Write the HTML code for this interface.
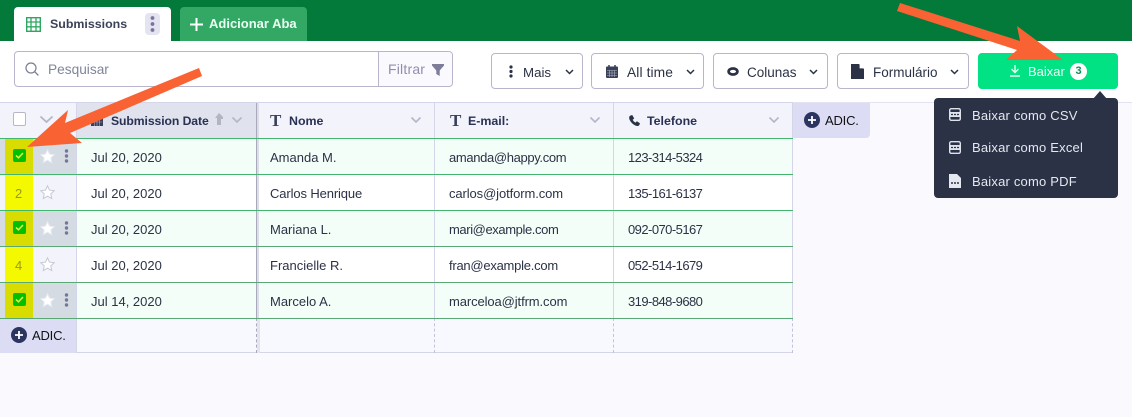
<!DOCTYPE html>
<html><head><meta charset="utf-8">
<style>
html,body{margin:0;padding:0;width:1132px;height:417px;overflow:hidden;background:#faf9fe;font-family:"Liberation Sans",sans-serif;color:#2b3245;font-size:13px}
.a{position:absolute;box-sizing:border-box}
.t{position:absolute;white-space:nowrap;line-height:16px}
.h{font-weight:bold;font-size:12.4px;color:#2a3152;top:112.500px}
.p{letter-spacing:-.55px}
.btn{position:absolute;box-sizing:border-box;top:53px;height:36px;background:#fff;border:1px solid #b8b6cc;border-radius:4px}
svg{position:absolute;overflow:visible}
</style></head><body>
<div class="a" style="left:0;top:0;width:1132px;height:41px;background:#037a3a"></div>
<div class="a" style="left:0;top:41px;width:1132px;height:61px;background:#fff"></div>

<!-- tabs -->
<div class="a" style="left:14px;top:7px;width:157px;height:34px;background:#fff;border-radius:4px 4px 0 0"></div>
<svg style="left:26px;top:17px" width="15" height="15"><rect x=".7" y=".7" width="13.6" height="13.6" fill="none" stroke="#2ea860" stroke-width="1.4"/><path d="M0 5h15M0 9.8h15M5 0v15M10 0v15" stroke="#2ea860" stroke-width="1.3"/></svg>
<div class="t" style="left:50px;top:16px;font-weight:bold;font-size:12.4px;color:#3a4258">Submissions</div>
<div class="a" style="left:145px;top:13px;width:15px;height:22px;background:#e4e3f2;border-radius:4px"></div>
<svg style="left:145px;top:13px" width="15" height="22"><g fill="#77769a"><circle cx="7.5" cy="5" r="1.9"/><circle cx="7.5" cy="11" r="1.9"/><circle cx="7.5" cy="17" r="1.9"/></g></svg>
<div class="a" style="left:180px;top:7px;width:127px;height:34px;background:#33a864;border-radius:4px 4px 0 0"></div>
<svg style="left:190px;top:18px" width="13" height="13"><path d="M6.5 0v13M0 6.5h13" stroke="#fff" stroke-width="2"/></svg>
<div class="t" style="left:209px;top:16px;font-weight:bold;font-size:13px;color:#eafff2">Adicionar Aba</div>

<!-- search -->
<div class="a" style="left:14px;top:51px;width:439px;height:36px;background:#fff;border:1px solid #b8b6cc;border-radius:4px"></div>
<div class="a" style="left:378px;top:52px;width:74px;height:34px;background:#faf9fe;border-left:1px solid #b8b6cc;border-radius:0 4px 4px 0"></div>
<svg style="left:25px;top:62px" width="15" height="15"><circle cx="6" cy="6" r="5" fill="none" stroke="#777f95" stroke-width="1.2"/><path d="M9.8 9.8l3.600 3.600" stroke="#777f95" stroke-width="1.3"/></svg>
<div class="t" style="left:48px;top:62px;font-size:13.700px;color:#7f8699">Pesquisar</div>
<div class="t" style="left:388px;top:61px;font-size:14px;letter-spacing:.2px;color:#8f8fad">Filtrar</div>
<svg style="left:432px;top:64px" width="12" height="12"><path d="M0 0h12v1.500L7.700 6.500V12L4.300 10V6.500L0 1.500z" fill="#7d7c99"/></svg>

<!-- toolbar buttons -->
<div class="btn" style="left:491px;width:92px"></div>
<svg style="left:509px;top:65px" width="4" height="13"><g fill="#2b3245"><circle cx="2" cy="2" r="1.600"/><circle cx="2" cy="6.500" r="1.600"/><circle cx="2" cy="11" r="1.600"/></g></svg>
<div class="t" style="left:523px;top:65px;font-size:13.300px">Mais</div>
<svg style="left:565px;top:69px" width="9" height="6"><path d="M1 1l3.500 3.500L8 1" fill="none" stroke="#2b3245" stroke-width="1.500"/></svg>

<div class="btn" style="left:591px;width:113px"></div>
<svg style="left:606px;top:65px" width="12" height="13"><rect x="0" y="1.500" width="12" height="11.500" rx="1" fill="#39405a"/><path d="M3 0v3M9 0v3" stroke="#39405a" stroke-width="1.500"/><path d="M1 5.500h10M1 8h10M1 10.500h10M3.500 5v7M6 5v7M8.500 5v7" stroke="#aeb2c2" stroke-width=".6"/></svg>
<div class="t" style="left:627px;top:65px;font-size:13.800px;letter-spacing:.1px">All time</div>
<svg style="left:686px;top:69px" width="9" height="6"><path d="M1 1l3.500 3.500L8 1" fill="none" stroke="#2b3245" stroke-width="1.500"/></svg>

<div class="btn" style="left:713px;width:115px"></div>
<svg style="left:727px;top:67px" width="12" height="9"><ellipse cx="6" cy="4.500" rx="4.400" ry="3" fill="none" stroke="#2b3245" stroke-width="2.700"/></svg>
<div class="t" style="left:747px;top:65px;font-size:13.500px">Colunas</div>
<svg style="left:809px;top:69px" width="9" height="6"><path d="M1 1l3.500 3.500L8 1" fill="none" stroke="#2b3245" stroke-width="1.500"/></svg>

<div class="btn" style="left:837px;width:132px"></div>
<svg style="left:851px;top:64px" width="13" height="15"><path d="M0 0h8l5 5v10H0z" fill="#2b3245"/><path d="M8.600 0v4.400H13" fill="#fff"/></svg>
<div class="t" style="left:873px;top:65px;font-size:13.500px">Formulário</div>
<svg style="left:950px;top:69px" width="9" height="6"><path d="M1 1l3.500 3.500L8 1" fill="none" stroke="#2b3245" stroke-width="1.500"/></svg>

<div class="a" style="left:978px;top:53px;width:140px;height:36px;background:#00e283;border-radius:4px"></div>
<svg style="left:1010px;top:65px" width="10" height="12"><path d="M5 0v7M1.500 4L5 7.500 8.500 4M0 11h10" fill="none" stroke="#eafff4" stroke-width="1.400"/></svg>
<div class="t" style="left:1028px;top:64px;font-size:13px;color:#eafff4">Baixar</div>
<div class="a" style="left:1070px;top:63px;width:17px;height:17px;background:#fff;border-radius:50%;color:#0a8f58;font-size:11px;font-weight:bold;line-height:17px;text-align:center">3</div>

<!-- table header -->
<div class="a" style="left:0;top:102px;width:793px;height:1px;background:#d5d5ea"></div>
<div class="a" style="left:793px;top:102px;width:339px;height:1px;background:#e2e2f2"></div>
<div class="a" style="left:0;top:103px;width:77px;height:35px;background:#f3f3fc"></div>
<div class="a" style="left:77px;top:103px;width:179px;height:35px;background:#e0e2ee"></div>
<div class="a" style="left:258px;top:103px;width:535px;height:35px;background:#f3f3fc"></div>
<div class="a" style="left:793px;top:103px;width:77px;height:35px;background:#dcddf5;border-radius:0 0 4px 0"></div>

<!-- body rows -->
<div class="a" style="left:0;top:138px;width:793px;height:36px;background:#f4fef8"></div>
<div class="a" style="left:0;top:174px;width:793px;height:36px;background:#fff"></div>
<div class="a" style="left:0;top:210px;width:793px;height:36px;background:#f4fef8"></div>
<div class="a" style="left:0;top:246px;width:793px;height:36px;background:#fff"></div>
<div class="a" style="left:0;top:282px;width:793px;height:36px;background:#f4fef8"></div>
<div class="a" style="left:0;top:318px;width:793px;height:35px;background:#f8f8ff;border-bottom:1px solid #d5d5ea"></div>

<!-- left column -->
<div class="a" style="left:0;top:138px;width:77px;height:36px;background:#d5dbe3"></div>
<div class="a" style="left:0;top:174px;width:77px;height:36px;background:#f3f3fc"></div>
<div class="a" style="left:0;top:210px;width:77px;height:36px;background:#d5dbe3"></div>
<div class="a" style="left:0;top:246px;width:77px;height:36px;background:#f3f3fc"></div>
<div class="a" style="left:0;top:282px;width:77px;height:36px;background:#d5dbe3"></div>
<div class="a" style="left:0;top:318px;width:77px;height:35px;background:#dcddf5"></div>

<div class="a" style="left:5px;top:138px;width:28px;height:36px;background:#d8dc00"></div>
<div class="a" style="left:5px;top:174px;width:28px;height:36px;background:#f4f900"></div>
<div class="a" style="left:5px;top:210px;width:28px;height:36px;background:#d8dc00"></div>
<div class="a" style="left:5px;top:246px;width:28px;height:36px;background:#f4f900"></div>
<div class="a" style="left:5px;top:282px;width:28px;height:36px;background:#d8dc00"></div>
<div class="t" style="left:15px;top:186px;font-size:13px;color:#9a9c10">2</div>
<div class="t" style="left:15px;top:258px;font-size:13px;color:#9a9c10">4</div>

<!-- column separators -->
<div class="a" style="left:76px;top:103px;width:1px;height:250px;background:#d5d5ea"></div>
<div class="a" style="left:256px;top:103px;width:1px;height:215px;background:#a9a9bd"></div>
<div class="a" style="left:257px;top:103px;width:2px;height:215px;background:#dddde5"></div>
<div class="a" style="left:434px;top:103px;width:1px;height:215px;background:#d5d5ea"></div>
<div class="a" style="left:613px;top:103px;width:1px;height:215px;background:#d5d5ea"></div>
<div class="a" style="left:792px;top:103px;width:1px;height:215px;background:#d5d5ea"></div>
<div class="a" style="left:256px;top:318px;width:0;height:35px;border-left:1px dashed #a9a9bd"></div>
<div class="a" style="left:257px;top:318px;width:3px;height:35px;background:#e4e4ea"></div>
<div class="a" style="left:434px;top:318px;width:0;height:35px;border-left:1px dashed #c2c2d8"></div>
<div class="a" style="left:613px;top:318px;width:0;height:35px;border-left:1px dashed #c2c2d8"></div>
<div class="a" style="left:792px;top:318px;width:0;height:35px;border-left:1px dashed #c2c2d8"></div>

<!-- row lines -->
<div class="a" style="left:0;top:138px;width:793px;height:1px;background:#42b56e"></div>
<div class="a" style="left:0;top:174px;width:793px;height:1px;background:#42b56e"></div>
<div class="a" style="left:0;top:210px;width:793px;height:1px;background:#42b56e"></div>
<div class="a" style="left:0;top:246px;width:793px;height:1px;background:#5aa876"></div>
<div class="a" style="left:0;top:282px;width:793px;height:1px;background:#5aa876"></div>
<div class="a" style="left:0;top:318px;width:793px;height:1px;background:#5aa876"></div>

<!-- header content -->
<div class="a" style="left:13px;top:112px;width:13px;height:14px;background:#fff;border:1px solid #b8b6cc;border-radius:2px"></div>
<svg style="left:40px;top:116px" width="13" height="7"><path d="M.5.5l6 5.500 6-5.500" fill="none" stroke="#b5b6c6" stroke-width="1.800"/></svg>
<svg style="left:91px;top:115px" width="12" height="11"><rect y="1" width="12" height="10" fill="#39405a"/><path d="M1 4h10M1 7h10M3.500 3v8M6 3v8M8.500 3v8" stroke="#aeb2c2" stroke-width=".6"/></svg>
<div class="t h" style="left:111px;font-size:12.200px;letter-spacing:-.08px">Submission Date</div>
<svg style="left:215px;top:113px" width="8" height="12"><path d="M0 5L4 0l4 4v2H6v6H2V5z" fill="#b3b5c0"/></svg>
<svg style="left:232px;top:117px" width="10" height="6"><path d="M.5.5L5 5 9.500.5" fill="none" stroke="#b5b6c6" stroke-width="1.600"/></svg>

<div class="t" style="left:270px;top:111px;font-family:'Liberation Serif',serif;font-weight:bold;font-size:17px;color:#39405a;line-height:20px">T</div>
<div class="t h" style="left:289px">Nome</div>
<svg style="left:411px;top:117px" width="10" height="6"><path d="M.5.5L5 5 9.500.5" fill="none" stroke="#b5b6c6" stroke-width="1.600"/></svg>

<div class="t" style="left:450px;top:111px;font-family:'Liberation Serif',serif;font-weight:bold;font-size:17px;color:#39405a;line-height:20px">T</div>
<div class="t h" style="left:468px">E-mail:</div>
<svg style="left:590px;top:117px" width="10" height="6"><path d="M.5.5L5 5 9.500.5" fill="none" stroke="#b5b6c6" stroke-width="1.600"/></svg>

<svg style="left:629px;top:115px" width="11" height="11"><path d="M1 .8L3.200 0l2 3.400-1.500 1.400c.6 1.300 1.400 2.200 2.700 2.800L8 6.200l3 2.200-.8 1.800c-1 1-2.700 1-4.200.2C3.500 9 1.500 7 .500 4.500 0 3 0 1.800 1 .8z" fill="#2b3245"/></svg>
<div class="t h" style="left:647px">Telefone</div>
<svg style="left:769px;top:117px" width="10" height="6"><path d="M.5.5L5 5 9.500.5" fill="none" stroke="#b5b6c6" stroke-width="1.600"/></svg>

<svg style="left:804px;top:112px" width="16" height="16"><circle cx="8" cy="8" r="8" fill="#2c3560"/><path d="M8 4v8M4 8h8" stroke="#fff" stroke-width="1.800"/></svg>
<div class="t" style="left:825px;top:112.500px;font-size:13px;color:#111;letter-spacing:-.2px">ADIC.</div>

<!-- checkboxes, stars, dots -->
<div class="a" style="left:13px;top:149px;width:13px;height:13px;background:#01c000;border-radius:2px"></div>
<svg style="left:15px;top:152px" width="9" height="7"><path d="M1 3.500l2.500 2.300L8 1" fill="none" stroke="#e8f03c" stroke-width="1.600"/></svg>
<div class="a" style="left:13px;top:221px;width:13px;height:13px;background:#01c000;border-radius:2px"></div>
<svg style="left:15px;top:224px" width="9" height="7"><path d="M1 3.500l2.500 2.300L8 1" fill="none" stroke="#e8f03c" stroke-width="1.600"/></svg>
<div class="a" style="left:13px;top:293px;width:13px;height:13px;background:#01c000;border-radius:2px"></div>
<svg style="left:15px;top:296px" width="9" height="7"><path d="M1 3.500l2.500 2.300L8 1" fill="none" stroke="#e8f03c" stroke-width="1.600"/></svg>

<svg style="left:40px;top:149px" width="15" height="14"><path d="M7.500.8l2 4.300 4.700.6-3.400 3.200.9 4.600-4.200-2.300-4.200 2.300.9-4.600L.8 5.700l4.700-.6z" fill="#fff" stroke="#e8eaf2"/></svg>
<svg style="left:40px;top:185px" width="15" height="14"><path d="M7.500.8l2 4.300 4.700.6-3.400 3.200.9 4.600-4.200-2.300-4.200 2.300.9-4.600L.8 5.700l4.700-.6z" fill="#fff" stroke="#c5c8d8"/></svg>
<svg style="left:40px;top:221px" width="15" height="14"><path d="M7.500.8l2 4.300 4.700.6-3.400 3.200.9 4.600-4.200-2.300-4.200 2.300.9-4.600L.8 5.700l4.700-.6z" fill="#fff" stroke="#e8eaf2"/></svg>
<svg style="left:40px;top:257px" width="15" height="14"><path d="M7.500.8l2 4.300 4.700.6-3.400 3.200.9 4.600-4.200-2.300-4.200 2.300.9-4.600L.8 5.700l4.700-.6z" fill="#fff" stroke="#c5c8d8"/></svg>
<svg style="left:40px;top:293px" width="15" height="14"><path d="M7.500.8l2 4.300 4.700.6-3.400 3.200.9 4.600-4.200-2.300-4.200 2.300.9-4.600L.8 5.700l4.700-.6z" fill="#fff" stroke="#e8eaf2"/></svg>

<svg style="left:64px;top:149px" width="5" height="14"><g fill="#77769a"><circle cx="2.500" cy="2" r="1.700"/><circle cx="2.500" cy="7" r="1.700"/><circle cx="2.500" cy="12" r="1.700"/></g></svg>
<svg style="left:64px;top:221px" width="5" height="14"><g fill="#77769a"><circle cx="2.500" cy="2" r="1.700"/><circle cx="2.500" cy="7" r="1.700"/><circle cx="2.500" cy="12" r="1.700"/></g></svg>
<svg style="left:64px;top:293px" width="5" height="14"><g fill="#77769a"><circle cx="2.500" cy="2" r="1.700"/><circle cx="2.500" cy="7" r="1.700"/><circle cx="2.500" cy="12" r="1.700"/></g></svg>

<svg style="left:11px;top:327px" width="16" height="16"><circle cx="8" cy="8" r="8" fill="#2c3560"/><path d="M8 4v8M4 8h8" stroke="#fff" stroke-width="1.800"/></svg>
<div class="t" style="left:32px;top:328px;font-size:13px;color:#111;letter-spacing:-.2px">ADIC.</div>

<!-- cells -->
<div class="t" style="left:91px;top:150px">Jul 20, 2020</div>
<div class="t" style="left:270px;top:150px">Amanda M.</div>
<div class="t" style="left:449px;top:150px;letter-spacing:-.35px">amanda@happy.com</div>
<div class="t p" style="left:628px;top:150px">123-314-5324</div>

<div class="t" style="left:91px;top:186px">Jul 20, 2020</div>
<div class="t" style="left:270px;top:186px;letter-spacing:-.12px">Carlos Henrique</div>
<div class="t" style="left:449px;top:186px;letter-spacing:-.1px">carlos@jotform.com</div>
<div class="t p" style="left:628px;top:186px">135-161-6137</div>

<div class="t" style="left:91px;top:222px">Jul 20, 2020</div>
<div class="t" style="left:270px;top:222px">Mariana L.</div>
<div class="t" style="left:449px;top:222px;letter-spacing:-.4px">mari@example.com</div>
<div class="t p" style="left:628px;top:222px">092-070-5167</div>

<div class="t" style="left:91px;top:258px">Jul 20, 2020</div>
<div class="t" style="left:270px;top:258px">Francielle R.</div>
<div class="t" style="left:449px;top:258px;letter-spacing:-.25px">fran@example.com</div>
<div class="t p" style="left:628px;top:258px">052-514-1679</div>

<div class="t" style="left:91px;top:294px">Jul 14, 2020</div>
<div class="t" style="left:270px;top:294px">Marcelo A.</div>
<div class="t" style="left:449px;top:294px;letter-spacing:-.1px">marceloa@jtfrm.com</div>
<div class="t p" style="left:628px;top:294px">319-848-9680</div>

<!-- dropdown -->
<div class="a" style="left:934px;top:98px;width:184px;height:100px;background:#2b3245;border-radius:4px"></div>
<svg style="left:1093px;top:91px" width="14" height="8"><path d="M0 8L7 0l7 8z" fill="#2b3245"/></svg>
<svg style="left:949px;top:108px" width="12" height="13"><rect x=".7" y=".7" width="10.600" height="11.600" rx="1.500" fill="none" stroke="#dfe2ea" stroke-width="1.400"/><rect x="0" y="4" width="12" height="5" fill="#dfe2ea"/><path d="M2 6.500h8" stroke="#2b3245" stroke-width="1.200" stroke-dasharray="2 1"/></svg>
<div class="t" style="left:972px;top:107.500px;font-size:13px;color:#e6e8ef;letter-spacing:.2px">Baixar como CSV</div>
<svg style="left:949px;top:141px" width="12" height="13"><rect x=".7" y=".7" width="10.600" height="11.600" rx="1.500" fill="none" stroke="#dfe2ea" stroke-width="1.400"/><rect x="0" y="4" width="12" height="5" fill="#dfe2ea"/><path d="M2 6.500h8" stroke="#2b3245" stroke-width="1.200" stroke-dasharray="2 1"/></svg>
<div class="t" style="left:972px;top:140px;font-size:13px;color:#e6e8ef;letter-spacing:.2px">Baixar como Excel</div>
<svg style="left:949px;top:174px" width="12" height="14"><path d="M0 0h8l4 4v10H0z" fill="#e6e8ef"/><path d="M2 9h8" stroke="#2b3245" stroke-width="1.500" stroke-dasharray="2 1"/></svg>
<div class="t" style="left:972px;top:174px;font-size:13px;color:#e6e8ef;letter-spacing:.2px">Baixar como PDF</div>

<!-- arrows -->
<svg style="left:0;top:0" width="1132" height="417">
<path d="M199 68L202 76 70 133 82 143 27 147 68 110 65 123z" fill="#f96233"/>
<path d="M900 3L1020 41 1017 26 1063 60 1006 60 1017 50 897 11z" fill="#f96233"/>
</svg>
</body></html>
